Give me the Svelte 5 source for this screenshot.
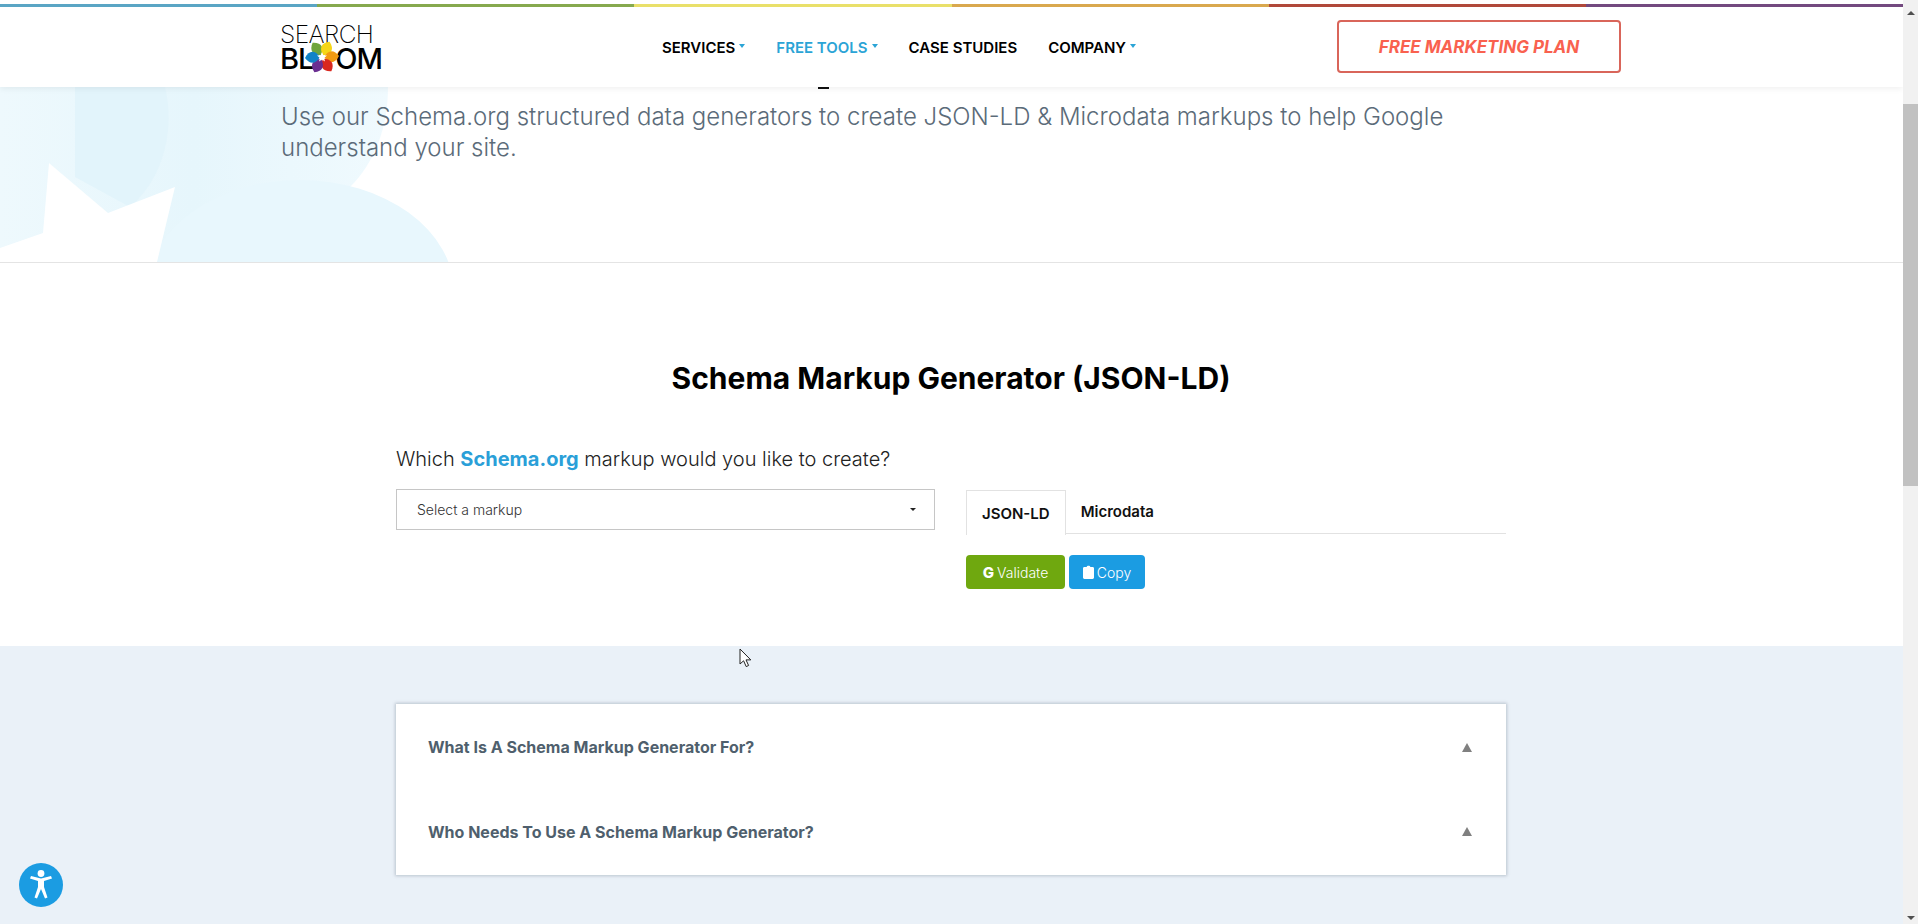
<script>
  const barColors = ["#5aa5c4", "#86a94e", "#e9e06a", "#d9a84e", "#b0483a", "#73497f"];
  const navItems = [
    { label: "SERVICES", caret: true },
    { label: "FREE TOOLS", caret: true, active: true },
    { label: "CASE STUDIES" },
    { label: "COMPANY", caret: true },
  ];
  const petals = [
    { color: "#6fa53c", angle: -30 },
    { color: "#f5d617", angle: 30 },
    { color: "#f39a12", angle: 90 },
    { color: "#d9281f", angle: 150 },
    { color: "#6a2f91", angle: 210 },
    { color: "#1283c7", angle: 270 },
  ];
  const questions = ["What Is A Schema Markup Generator For?", "Who Needs To Use A Schema Markup Generator?"];
</script>

<div class="page">
  <main class="content">
    <header class="header">
      <div class="color-bar">
        {#each barColors as color}
          <span style="background: {color}"></span>
        {/each}
      </div>
      <div class="header-row">
        <div class="logo">
          <span class="logo-top">SEARCH</span>
          <span class="logo-bottom">BL<span class="logo-gap"></span>OM</span>
          <svg class="flower" viewBox="-18 -18 36 36" width="36" height="36" aria-hidden="true">
            {#each petals as petal}
              <path d="M0 -2C-7 -6 -8 -12 -1 -17C7 -13 7 -7 0 -2Z" fill={petal.color} transform="rotate({petal.angle})" />
            {/each}
            <path d="M0 -5L1.4 -1.6L5 -1.4L2.1 .9L3 4.4L0 2.4L-3 4.4L-2.1 .9L-5 -1.4L-1.4 -1.6Z" fill="#fff" />
          </svg>
        </div>
        <nav class="nav">
          {#each navItems as item}
            <span class="nav-item" class:active={item.active}>
              {item.label}
              {#if item.caret}<i class="nav-caret"></i>{/if}
            </span>
          {/each}
        </nav>
        <span class="plan-button">FREE MARKETING PLAN</span>
      </div>
    </header>

    <section class="hero">
      <svg class="hero-shapes" viewBox="0 0 500 175" width="500" height="175" aria-hidden="true">
        <defs>
          <linearGradient id="fade" x1="0" x2="1" y1="0" y2="0">
            <stop offset="0" stop-color="#eef9fd" />
            <stop offset="0.5" stop-color="#e6f6fc" />
            <stop offset="1" stop-color="#f0fafe" />
          </linearGradient>
        </defs>
        <path d="M0 0H388C388 40 375 75 350 100L200 175H0Z" fill="url(#fade)" />
        <path d="M75 0H165C175 40 165 90 130 120L75 90Z" fill="#e2f4fb" />
        <ellipse cx="300" cy="205" rx="154" ry="112" fill="#e8f7fd" />
        <path d="M49 76L108 126L175 100L157 175H0V161L43 146Z" fill="#fff" />
      </svg>
      <i class="clipped-glyph"></i>
      <p class="hero-text">Use our Schema.org structured data generators to create JSON-LD &amp; Microdata markups to help Google understand your site.</p>
    </section>

    <section class="tool">
      <h2>Schema Markup Generator (JSON-LD)</h2>
      <div class="tool-grid">
        <div>
          <p class="question">Which <b>Schema.org</b> markup would you like to create?</p>
          <div class="select">
            <span>Select a markup</span>
            <i class="select-caret"></i>
          </div>
        </div>
        <div class="output">
          <div class="tabs">
            <span class="tab current">JSON-LD</span>
            <span class="tab">Microdata</span>
          </div>
          <div class="actions">
            <span class="action validate"><b class="g-mark">G</b>Validate</span>
            <span class="action copy">
              <svg viewBox="0 0 12 15" width="11" height="14" aria-hidden="true">
                <path d="M1.5 2H4C4 .3 8 .3 8 2H10.5C11.3 2 12 2.7 12 3.5V13.5C12 14.3 11.3 15 10.5 15H1.5C.7 15 0 14.3 0 13.5V3.5C0 2.7 .7 2 1.5 2Z" fill="#fff" />
              </svg>
              Copy
            </span>
          </div>
        </div>
      </div>
    </section>

    <section class="faq">
      <div class="faq-card">
        {#each questions as q}
          <div class="faq-row">
            <span>{q}</span>
            <i class="faq-arrow"></i>
          </div>
        {/each}
      </div>
    </section>
  </main>

  <aside class="scrollbar">
    <i class="arrow-up"></i>
    <div class="track"><div class="thumb"></div></div>
    <i class="arrow-down"></i>
  </aside>

  <div class="a11y">
    <svg viewBox="0 0 44 44" width="44" height="44" aria-hidden="true">
      <circle cx="22" cy="10.5" r="3.4" fill="#fff" />
      <path d="M11 15.5L19 18V24L15.5 34.5L18 35.5L22 26L26 35.5L28.5 34.5L25 24V18L33 15.5L32 13L22 15.5L12 13Z" fill="#fff" />
    </svg>
  </div>

  <svg class="cursor" viewBox="0 0 13 20" width="13" height="20" aria-hidden="true">
    <path d="M1 1V16L4.6 12.8L7.2 18.6L9.6 17.5L7 11.9H11.8Z" fill="#fff" stroke="#222" stroke-width="1" />
  </svg>
</div>

<style>
  :global(body) {
    margin: 0;
    font-family: Inter, "Open Sans", sans-serif;
    overflow: hidden;
  }

  .page {
    position: relative;
    display: flex;
    width: 1918px;
    height: 924px;
    overflow: hidden;
    background: #fff;
  }

  .content {
    flex: 1;
    min-width: 0;
    display: flex;
    flex-direction: column;
  }

  .header {
    position: relative;
    z-index: 2;
    height: 87px;
    box-sizing: border-box;
    padding-top: 4px;
    background: #fff;
    box-shadow: 0 2px 6px rgba(0, 0, 0, 0.06);
  }

  .color-bar {
    display: flex;
    height: 3px;
  }

  .color-bar span {
    flex: 1;
  }

  .header-row {
    display: flex;
    align-items: center;
    height: 80px;
    padding: 0 282px 0 280px;
  }

  .logo {
    position: relative;
    width: 102px;
    height: 50px;
    display: flex;
    flex-direction: column;
    color: #000;
  }

  .logo-top {
    font-size: 24.5px;
    font-weight: 200;
    line-height: 24px;
    letter-spacing: -0.6px;
  }

  .logo-bottom {
    font-size: 29px;
    font-weight: 500;
    line-height: 26px;
    letter-spacing: -1px;
    display: flex;
  }

  .logo-gap {
    width: 28px;
  }

  .flower {
    position: absolute;
    left: 24px;
    top: 17px;
  }

  .nav {
    display: flex;
    gap: 31px;
    margin-left: 280px;
    flex: 1;
  }

  .nav-item {
    display: flex;
    align-items: center;
    gap: 4px;
    font-size: 15px;
    font-weight: 600;
    color: #000;
    white-space: nowrap;
  }

  .nav-item.active {
    color: #2ba4d6;
  }

  .nav-caret {
    width: 0;
    height: 0;
    border-left: 3.5px solid transparent;
    border-right: 3.5px solid transparent;
    border-top: 4px solid #2ba4d6;
    margin-top: -2px;
  }

  .plan-button {
    width: 284px;
    height: 53px;
    box-sizing: border-box;
    display: flex;
    align-items: center;
    justify-content: center;
    border: 2px solid #d9655a;
    border-radius: 4px;
    margin-top: -1px;
    color: #f9614f;
    font-size: 17px;
    font-weight: 700;
    font-style: italic;
  }

  .hero {
    position: relative;
    height: 176px;
    box-sizing: border-box;
    padding: 14px 0 0 281px;
    border-bottom: 1px solid #e4e4e4;
    overflow: hidden;
  }

  .hero-shapes {
    position: absolute;
    left: 0;
    top: 0;
  }

  .clipped-glyph {
    position: absolute;
    left: 818px;
    top: 0;
    width: 11px;
    height: 2px;
    background: #111;
  }

  .hero-text {
    position: relative;
    margin: 0;
    width: 1270px;
    font-size: 24px;
    line-height: 31px;
    font-weight: 300;
    color: #5b6b79;
  }

  .tool {
    height: 383px;
    box-sizing: border-box;
    padding: 95px 397px 0 396px;
  }

  .tool h2 {
    margin: 0 0 49px;
    font-size: 30px;
    line-height: 40px;
    font-weight: 700;
    color: #000;
    text-align: center;
  }

  .tool-grid {
    display: grid;
    grid-template-columns: 539px 540px;
    gap: 31px;
  }

  .question {
    margin: 0 0 18px;
    font-size: 20px;
    line-height: 24px;
    font-weight: 300;
    color: #222;
  }

  .question b {
    color: #2a9fd8;
    font-weight: 700;
  }

  .select {
    height: 41px;
    box-sizing: border-box;
    display: flex;
    align-items: center;
    justify-content: space-between;
    padding: 0 18px 0 20px;
    border: 1px solid #c6c6c6;
    font-size: 14px;
    font-weight: 300;
    color: #333;
  }

  .select-caret {
    width: 0;
    height: 0;
    border-left: 3px solid transparent;
    border-right: 3px solid transparent;
    border-top: 3px solid #222;
  }

  .output {
    padding-top: 43px;
  }

  .tabs {
    display: flex;
    height: 44px;
    box-sizing: border-box;
    border-bottom: 1px solid #e2e2e2;
  }

  .tab {
    display: flex;
    align-items: center;
    padding: 0 15px;
    font-size: 15px;
    font-weight: 600;
    color: #111;
  }

  .tab.current {
    background: #fff;
    border: 1px solid #e2e2e2;
    border-bottom: 0;
    height: 44px;
  }

  .actions {
    display: flex;
    gap: 4px;
    margin-top: 21px;
  }

  .action {
    display: flex;
    align-items: center;
    justify-content: center;
    gap: 3px;
    height: 34px;
    border-radius: 4px;
    color: #fff;
    font-size: 14px;
    font-weight: 300;
  }

  .validate {
    width: 99px;
    background: #6fa80f;
  }

  .g-mark {
    font-size: 15px;
    font-weight: 800;
  }

  .copy {
    width: 76px;
    background: #1b9ce2;
  }

  .faq {
    flex: 1;
    padding: 58px 397px 0 396px;
    background: #eaf1f8;
  }

  .faq-card {
    height: 171px;
    box-sizing: border-box;
    padding: 1px 0;
    background: #fff;
    box-shadow: 0 0 3px 1px rgba(100, 115, 130, 0.35);
  }

  .faq-row {
    height: 85px;
    box-sizing: border-box;
    display: flex;
    align-items: center;
    justify-content: space-between;
    padding: 0 34px 0 32px;
    font-size: 16px;
    font-weight: 700;
    color: #4f5f6d;
  }

  .faq-row:first-child {
    height: 84px;
  }

  .faq-arrow {
    width: 0;
    height: 0;
    border-left: 5px solid transparent;
    border-right: 5px solid transparent;
    border-bottom: 9px solid #808080;
  }

  .scrollbar {
    width: 15px;
    display: flex;
    flex-direction: column;
    align-items: center;
    background: #f1f1f1;
    position: relative;
    z-index: 3;
  }

  .arrow-up,
  .arrow-down {
    width: 0;
    height: 0;
    border-left: 4px solid transparent;
    border-right: 4px solid transparent;
  }

  .arrow-up {
    margin: 11px 0 5px;
    border-bottom: 4px solid #505050;
  }

  .arrow-down {
    margin: 5px 0 4px;
    border-top: 4px solid #505050;
  }

  .track {
    flex: 1;
    width: 100%;
    padding-top: 84px;
  }

  .thumb {
    height: 382px;
    background: #c1c1c1;
  }

  .a11y {
    position: absolute;
    left: 19px;
    top: 863px;
    width: 44px;
    height: 44px;
    border-radius: 50%;
    background: #1b9ce2;
  }

  .a11y svg {
    display: block;
  }

  .cursor {
    position: absolute;
    left: 739px;
    top: 648px;
  }
</style>
